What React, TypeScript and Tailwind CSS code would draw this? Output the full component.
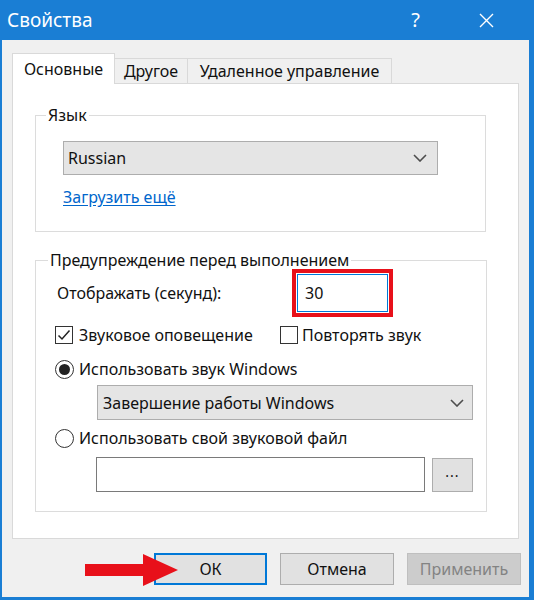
import React from 'react';

const font = { fontFamily: '"Noto Sans", "Open Sans", sans-serif' };

function Chevron() {
  return (
    <svg width="14" height="8" viewBox="0 0 14 8" fill="none">
      <path d="M1 1l6 6 6-6" stroke="#4d4d4d" strokeWidth="1.6" />
    </svg>
  );
}

function Checkbox({ checked }: { checked?: boolean }) {
  return (
    <span className="flex h-[18px] w-[18px] shrink-0 items-center justify-center border border-[#333] bg-white">
      {checked && (
        <svg width="14" height="12" viewBox="0 0 14 12" fill="none">
          <path d="M1.5 6.5l3.5 3.5 7.5-8.5" stroke="#222" strokeWidth="1.5" />
        </svg>
      )}
    </span>
  );
}

function Radio({ checked }: { checked?: boolean }) {
  return (
    <span className="flex h-[19px] w-[19px] shrink-0 items-center justify-center rounded-full border border-[#333] bg-white">
      {checked && <span className="h-[11px] w-[11px] rounded-full bg-[#222]" />}
    </span>
  );
}

export default function App() {
  return (
    <div className="relative flex h-[600px] w-[534px] flex-col bg-[#1a7ed4] text-[16px] text-[#111]" style={font}>
      {/* title bar */}
      <div className="flex h-[40px] shrink-0 items-center text-white">
        <span className="ml-[7px] text-[19px]">Свойства</span>
        <span className="ml-auto mr-[59px] text-[20px]">?</span>
        <svg className="mr-[40px]" width="15" height="15" viewBox="0 0 15 15">
          <path d="M1 1l13 13M14 1L1 14" stroke="white" strokeWidth="1.4" />
        </svg>
      </div>

      <div className="mb-[3px] ml-[2px] mr-[5px] flex flex-1 flex-col bg-[#f0f0f0] pl-[10px] pr-[10px]">
        {/* tabs */}
        <div className="relative z-10 -mb-px mt-[13px] flex items-end">
          <div className="flex h-[31px] w-[103px] items-center justify-center border border-b-0 border-[#d9d9d9] bg-white">
            Основные
          </div>
          <div className="flex h-[26px] w-[73px] items-center justify-center border border-l-0 border-[#d9d9d9] bg-[#f0f0f0]">
            Другое
          </div>
          <div className="flex h-[26px] w-[204px] items-center justify-center border border-l-0 border-[#d9d9d9] bg-[#f0f0f0]">
            Удаленное управление
          </div>
        </div>

        {/* panel */}
        <div className="flex h-[456px] w-[507px] flex-col border border-[#d9d9d9] bg-white pl-[22px] pt-[20px]">
          <fieldset className="w-[451px] border border-[#dcdcdc] px-[27px] pb-[23px] pt-[15px]">
            <legend className="-ml-[17px] px-[2px] leading-[22px]">Язык</legend>
            <div className="flex h-[34px] w-[375px] items-center justify-between border border-[#adadad] bg-[#e5e5e5] pl-[4px] pr-[10px]">
              <span>Russian</span>
              <Chevron />
            </div>
            <div className="mt-[11px] leading-[22px]">
              <span className="text-[#0066cc] underline underline-offset-2">Загрузить ещё</span>
            </div>
          </fieldset>

          <fieldset className="mt-[18px] w-[451px] border border-[#dcdcdc] pb-[19px] pl-[19px] pr-[13px]">
            <legend className="-ml-[7px] px-[2px] leading-[20px]">Предупреждение перед выполнением</legend>
            <div className="-mt-[1px] flex items-center">
              <span className="ml-[2px] w-[235px]">Отображать (секунд):</span>
              <div className="border-[4px] border-[#e8101a] p-[1px]">
                <div className="flex h-[38px] w-[91px] items-center border border-[#0078d7] bg-white pl-[7px]">30</div>
              </div>
            </div>
            <div className="mt-[7px] flex h-[22px] items-center">
              <div className="flex w-[225px] items-center gap-[6px]">
                <Checkbox checked />
                <span>Звуковое оповещение</span>
              </div>
              <div className="flex items-center gap-[4px]">
                <Checkbox />
                <span>Повторять звук</span>
              </div>
            </div>
            <div className="mt-[12px] flex h-[22px] items-center gap-[5px]">
              <Radio checked />
              <span>Использовать звук Windows</span>
            </div>
            <div className="ml-[42px] mt-[5px] flex h-[35px] items-center justify-between border border-[#adadad] bg-[#e5e5e5] pl-[5px] pr-[8px]">
              <span>Завершение работы Windows</span>
              <Chevron />
            </div>
            <div className="mt-[7px] flex h-[22px] items-center gap-[5px]">
              <Radio />
              <span>Использовать свой звуковой файл</span>
            </div>
            <div className="ml-[41px] mt-[8px] flex items-center gap-[7px]">
              <div className="h-[35px] w-[329px] border border-[#7a7a7a] bg-white" />
              <div className="flex h-[34px] w-[41px] items-center justify-center border border-[#adadad] bg-[#e1e1e1] pb-[6px] text-[14px] tracking-[1px]">
                ...
              </div>
            </div>
          </fieldset>
        </div>

        {/* buttons */}
        <div className="mt-[14px] flex justify-end gap-[13px]">
          <div className="flex h-[32px] w-[113px] items-center justify-center border-2 border-[#0078d7] bg-[#e1e1e1]">ОК</div>
          <div className="flex h-[32px] w-[114px] items-center justify-center border border-[#adadad] bg-[#e1e1e1]">Отмена</div>
          <div className="-mr-[2px] flex h-[32px] w-[114px] items-center justify-center border border-[#bfbfbf] bg-[#cccccc] text-[#838383]">
            Применить
          </div>
        </div>
      </div>

      {/* annotation arrow */}
      <svg className="absolute left-[84px] top-[553px]" width="96" height="34" viewBox="0 0 96 34">
        <path d="M1 11h58V1l35 16-35 16V23H1z" fill="#e8101a" />
      </svg>
    </div>
  );
}
